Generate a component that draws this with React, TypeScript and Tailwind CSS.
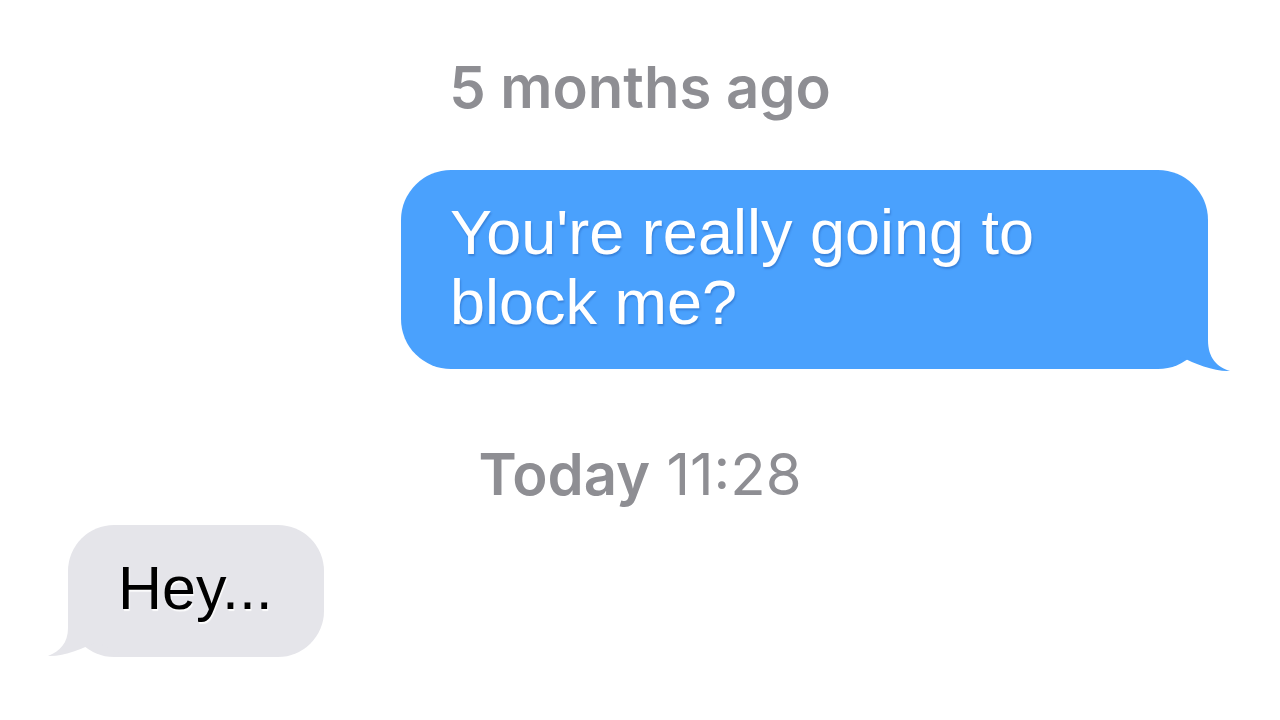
export default function App() {
  return (
    <div className="w-[1280px] h-[720px] bg-white flex flex-col overflow-hidden">
      <div className="pt-[58px] text-center font-['Inter',sans-serif] font-semibold text-[58px] leading-none text-[#8e8e93]">
        5 months ago
      </div>

      <div className="flex justify-end pr-[72px] mt-[54px]">
        <div className="relative w-[807px] h-[199px] rounded-[50px] bg-[#4aa1fd] pl-[49px] pt-[27px]">
          <p className="relative z-10 font-['Liberation_Sans',Arial,sans-serif] text-[63px] leading-[70px] text-white [text-shadow:1px_2px_2px_rgba(0,40,120,0.25)]">
            You're really going to
            <br />
            block me?
          </p>
          <svg
            className="absolute right-[-24px] bottom-[-4px]"
            width="84"
            height="64"
            viewBox="-60 -60 84 64"
          >
            <path
              d="M -60 -60 L 0 -60 L 0 -29 C 0 -11 9 -2 22 2 C 8 3 -14 -5 -26 -12 C -36 -4 -48 0 -62 0 Z"
              fill="#4aa1fd"
            />
          </svg>
        </div>
      </div>

      <div className="mt-[76px] text-center font-['Inter',sans-serif] text-[58px] leading-none text-[#8e8e93]">
        <span className="font-semibold">Today</span> <span className="font-normal">11:28</span>
      </div>

      <div className="flex pl-[68px] mt-[22px]">
        <div className="relative w-[256px] h-[132px] rounded-[46px] bg-[#e5e5ea] pl-[50px] pt-[33px]">
          <p className="relative z-10 font-['Liberation_Sans',Arial,sans-serif] text-[61px] leading-[61px] text-black [text-shadow:1px_2px_1px_rgba(255,255,255,0.9)]">
            Hey...
          </p>
          <svg
            className="absolute left-[-22px] bottom-[-2px]"
            width="94"
            height="64"
            viewBox="-22 -60 94 64"
          >
            <path
              d="M 72 -60 L 0 -60 L 0 -27 C 0 -12 -8 -4 -20 1 C -6 2 16 -6 29 -14 C 40 -5 54 0 72 0 Z"
              fill="#e5e5ea"
            />
          </svg>
        </div>
      </div>
    </div>
  )
}
